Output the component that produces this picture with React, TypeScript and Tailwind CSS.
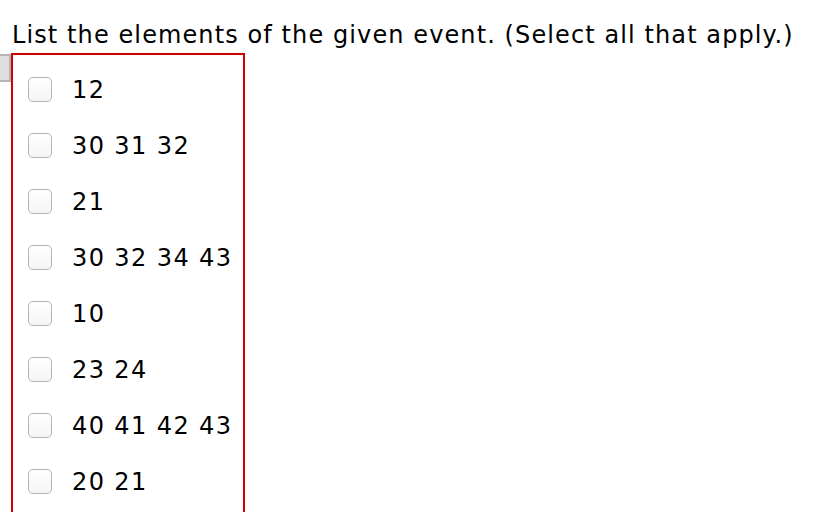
const options = [
  "12",
  "30 31 32",
  "21",
  "30 32 34 43",
  "10",
  "23 24",
  "40 41 42 43",
  "20 21",
];

export default function App() {
  return (
    <div className="h-[512px] w-[824px] overflow-hidden bg-white text-black font-['Verdana','DejaVu_Sans',sans-serif]">
      <div className="pl-[12px] pt-[17px] text-[24px] leading-[36px] tracking-[1.1px]">
        List the elements of the given event. (Select all that apply.)
      </div>
      <div className="flex">
        <div className="mt-[1px] h-[28px] w-[11px] border-t-2 border-r-2 border-b-2 border-[#b5b5b5] bg-[#dedede]" />
        <div className="w-[234px] border-2 border-[#d40000] pt-[21px] pl-[15px]">
          {options.map((o) => (
            <label key={o} className="flex h-[56px] items-start gap-[20px]">
              <span className="mt-[1px] h-[25px] w-[24px] rounded-[5px] border border-[#b3b3b3] bg-gradient-to-b from-white to-[#f4f4f4]" />
              <span className="mt-[2px] text-[24px] leading-[24px] tracking-[1.4px]">{o}</span>
            </label>
          ))}
        </div>
      </div>
    </div>
  );
}
